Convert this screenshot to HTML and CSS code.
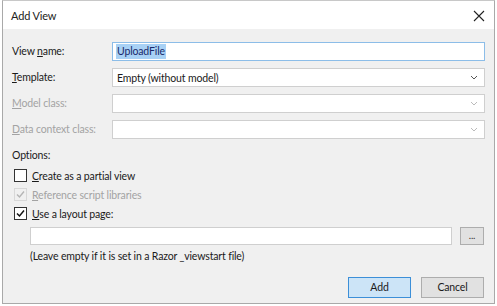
FILE: index.html
```html
<!DOCTYPE html>
<html>
<head>
<meta charset="utf-8">
<link rel="stylesheet" href="styles.css">
</head>
<body>
<div class="dialog">
  <div class="titlebar">
    <span class="title">Add View</span>
    <svg class="close" width="12" height="12" viewBox="0 0 12 12"><path d="M1 1 L11 11 M11 1 L1 11" stroke="#222" stroke-width="1.1" fill="none"/></svg>
  </div>
  <div class="body">
    <div class="form">
      <div class="label">View <u>n</u>ame:</div>
      <div class="field focus"><span class="sel">UploadFile</span></div>
      <div class="label"><u>T</u>emplate:</div>
      <div class="field select"><span>Empty (without model)</span><svg class="chev" width="8" height="5" viewBox="0 0 8 5"><path d="M1 1 L4 4 L7 1" stroke="#555" fill="none"/></svg></div>
      <div class="label disabled"><u>M</u>odel class:</div>
      <div class="field select off"><span></span><svg class="chev" width="8" height="5" viewBox="0 0 8 5"><path d="M1 1 L4 4 L7 1" stroke="#bbb" fill="none"/></svg></div>
      <div class="label disabled"><u>D</u>ata context class:</div>
      <div class="field select off"><span></span><svg class="chev" width="8" height="5" viewBox="0 0 8 5"><path d="M1 1 L4 4 L7 1" stroke="#bbb" fill="none"/></svg></div>
    </div>
    <div class="options">Options:</div>
    <div class="check"><span class="box"></span><span><u>C</u>reate as a partial view</span></div>
    <div class="check disabled"><span class="box off"><svg width="11" height="11" viewBox="0 0 11 11"><path d="M2 5.5 L4.5 8 L9 2.5" stroke="#b5b5b5" stroke-width="1.4" fill="none"/></svg></span><span><u>R</u>eference script libraries</span></div>
    <div class="check"><span class="box"><svg width="11" height="11" viewBox="0 0 11 11"><path d="M2 5.5 L4.5 8 L9 2.5" stroke="#111" stroke-width="1.5" fill="none"/></svg></span><span><u>U</u>se a layout page:</span></div>
    <div class="layout-row">
      <div class="field layout"></div>
      <div class="browse">...</div>
    </div>
    <div class="hint">(Leave empty if it is set in a Razor _viewstart file)</div>
    <div class="footer">
      <div class="btn primary">Add</div>
      <div class="btn">Cancel</div>
    </div>
  </div>
</div>
</body>
</html>
```
FILE: styles.css
```css
html, body {
  margin: 0;
  padding: 0;
  background: #ffffff;
}
body {
  font-family: "Segoe UI", "Lato", "Open Sans", sans-serif;
  font-size: 10.5px;
  letter-spacing: -0.15px;
  color: #1a1a1a;
}
.dialog {
  margin-left: 2px;
  width: 491px;
  height: 302px;
  border: 1px solid #a9a9a9;
  border-top-color: #c8c8c8;
  display: flex;
  flex-direction: column;
  background: #f0f0f0;
  overflow: hidden;
}
.titlebar {
  height: 28px;
  flex: none;
  background: #ffffff;
  display: flex;
  align-items: center;
  justify-content: space-between;
  padding: 0 9px 0 8px;
}
.title {
  font-size: 11px;
  color: #222;
}
.close {
  margin-top: 1px;
}
.body {
  flex: 1;
  padding: 13px 9px 5px 9px;
  display: flex;
  flex-direction: column;
}
.form {
  display: grid;
  grid-template-columns: 100px 1fr;
  row-gap: 7px;
  align-items: center;
}
.label {
  line-height: 19px;
  white-space: nowrap;
}
.label.disabled {
  color: #a3a3a3;
}
.field {
  height: 19px;
  box-sizing: border-box;
  background: #fff;
  border: 1px solid #cfcfcf;
  display: flex;
  align-items: center;
  padding: 0 4px;
}
.field.focus {
  border-color: #8cbde8;
  padding-left: 3px;
}
.sel {
  background: #a8d1f5;
  color: #1a2a6a;
  line-height: 15px;
  padding: 0 1px;
}
.select {
  justify-content: space-between;
  padding-right: 6px;
}
.chev {
  display: block;
}
.options {
  margin-top: 8px;
  line-height: 16px;
}
.check {
  display: flex;
  align-items: center;
  height: 19px;
  margin-left: 2px;
  white-space: nowrap;
}
.options + .check {
  margin-top: 3px;
}
.check .box {
  width: 11px;
  height: 11px;
  border: 1px solid #333;
  background: #fff;
  margin-right: 5px;
  display: flex;
  align-items: center;
  justify-content: center;
}
.check .box.off {
  border-color: #d8d8d8;
  background: #f0f0f0;
}
.check.disabled {
  color: #a3a3a3;
}
.layout-row {
  display: flex;
  align-items: flex-start;
  margin-top: 4px;
  margin-left: 18px;
  gap: 8px;
}
.field.layout {
  width: 422px;
  height: 18px;
}
.browse {
  width: 24px;
  height: 18px;
  box-sizing: border-box;
  border: 1px solid #adadad;
  background: #e1e1e1;
  font-size: 10px;
  line-height: 14px;
  text-align: center;
  color: #333;
}
.hint {
  margin-left: 18px;
  margin-top: 3px;
  line-height: 16px;
  white-space: nowrap;
}
.footer {
  display: flex;
  justify-content: flex-end;
  gap: 10px;
  margin-top: auto;
  padding-right: 1px;
}
.btn {
  width: 63px;
  height: 21px;
  box-sizing: border-box;
  border: 1px solid #adadad;
  background: #e1e1e1;
  text-align: center;
  line-height: 19px;
}
.btn.primary {
  background: #cce4f7;
  border-color: #3c8fd8;
}
```
